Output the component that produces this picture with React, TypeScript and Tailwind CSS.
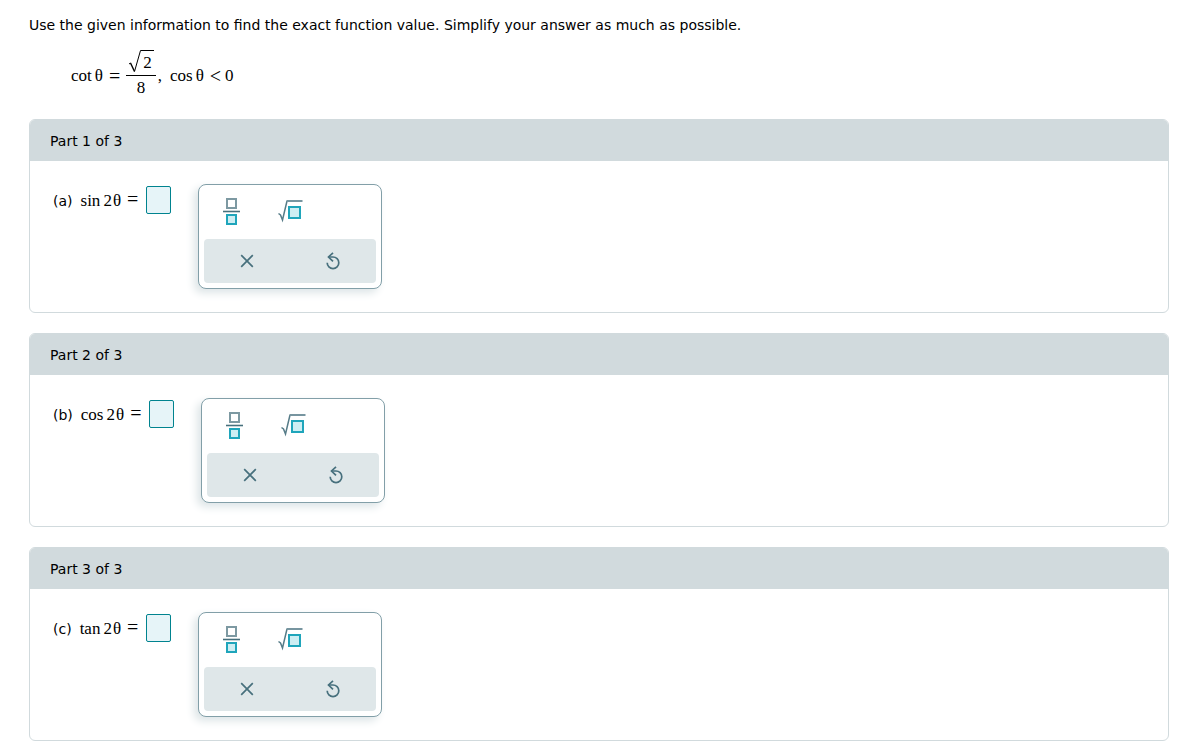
import { useState } from 'react';

interface Part {
  label: string;
  fn: string;
}

const parts: Part[] = [
  { label: 'a', fn: 'sin' },
  { label: 'b', fn: 'cos' },
  { label: 'c', fn: 'tan' },
];

const mathFont = "font-['Liberation_Serif',serif] text-[17px]";
const relationFont = "font-['Liberation_Serif',serif] text-[20px] leading-5";

function FractionIcon() {
  return (
    <svg width="17" height="27" viewBox="0 0 17 27" fill="none" aria-hidden="true">
      <rect x="4" y="1" width="9" height="9" fill="#fff" stroke="#7d99a2" strokeWidth="2" />
      <path d="M0 13.5h17" stroke="#c9d6d9" strokeWidth="3" />
      <path d="M0 13.5h17" stroke="#47707d" />
      <rect x="4" y="17" width="9" height="9" fill="#cdeef3" stroke="#1fa5bb" strokeWidth="2" />
    </svg>
  );
}

function RootIcon() {
  return (
    <svg width="25" height="23" viewBox="0 0 25 23" fill="none" aria-hidden="true">
      <path d="M.5 13.5L2.5 15L4.500 20L9 1" stroke="#567c88" strokeWidth="1.5" />
      <path d="M8.5 1H24.500" stroke="#7795a0" strokeWidth="2" />
      <rect x="11" y="7" width="11" height="11" fill="#cdeef3" stroke="#1fa5bb" strokeWidth="2" />
    </svg>
  );
}

function ClearIcon() {
  return (
    <svg width="14" height="14" viewBox="0 0 14 14" fill="none" aria-hidden="true">
      <path d="M1.200 1.200l11.600 11.600M12.800 1.200l-11.600 11.600" stroke="#47707d" strokeWidth="1.700" />
    </svg>
  );
}

function ResetIcon() {
  return (
    <svg width="14" height="18" viewBox="0 0 14 18" fill="none" aria-hidden="true">
      <path d="M1.200 10.800a5.800 5.800 0 1 0 5.800-5.800H2.500" stroke="#47707d" strokeWidth="1.700" />
      <path d="M7 .8L2.500 5L7 9.300" stroke="#47707d" strokeWidth="1.700" />
    </svg>
  );
}

function Given() {
  return (
    <div className={`flex items-center pl-[42px] ${mathFont} leading-5`}>
      <span className="pt-0.5">cot</span>
      <span className="ml-[3px] pt-0.5">θ</span>
      <span className={`ml-1.5 pt-0.5 ${relationFont}`}>=</span>
      <span className="ml-1.5 flex flex-col items-center">
        <span className="flex border-b border-black pr-0.5 pb-0.5 pl-[3px]">
          <svg width="12" height="22" viewBox="0 0 12 22" fill="none" aria-hidden="true">
            <path d="M0 14L1.500 13" stroke="#000" />
            <path d="M1.500 13L5.500 21.500" stroke="#000" strokeWidth="1.400" />
            <path d="M5.500 21.500L11.500 .5H12" stroke="#000" />
          </svg>
          <span className="border-t border-black pt-0.5 pr-0.5 pl-0.5 leading-5">2</span>
        </span>
        <span className="leading-6">8</span>
      </span>
      <span className="ml-0.5 pt-0.5">,</span>
      <span className="ml-2 pt-0.5">cos</span>
      <span className="ml-[3px] pt-0.5">θ</span>
      <span className={`ml-1.5 pt-0.5 ${relationFont}`}>&lt;</span>
      <span className="ml-1 pt-0.5">0</span>
    </div>
  );
}

interface KeypadProps {
  onInsert: (text: string) => void;
  onClear: () => void;
}

function Keypad({ onInsert, onClear }: KeypadProps) {
  return (
    <div className="w-[184px] rounded-lg border border-[#829fa8] bg-white p-[5px] shadow-[-4px_4px_8px_#dde5e7]">
      <div className="grid h-[49px] grid-cols-[55px_63px] pb-1.5">
        <button type="button" aria-label="Fraction" className="flex items-center justify-center" onClick={() => onInsert('/')}>
          <FractionIcon />
        </button>
        <button type="button" aria-label="Square root" className="flex items-center justify-center" onClick={() => onInsert('√')}>
          <RootIcon />
        </button>
      </div>
      <div className="grid h-11 grid-cols-2 rounded-sm bg-[#dfe7e9]">
        <button type="button" aria-label="Clear" className="flex items-center justify-center" onClick={onClear}>
          <ClearIcon />
        </button>
        <button type="button" aria-label="Reset" className="flex items-center justify-center" onClick={onClear}>
          <ResetIcon />
        </button>
      </div>
    </div>
  );
}

function PartCard({ part, index }: { part: Part; index: number }) {
  const [answer, setAnswer] = useState('');
  const id = `answer-${part.label}`;

  return (
    <section className="overflow-hidden rounded-md border border-[#d1dadd]">
      <h2 className="bg-[#d1dadd] px-5 pt-[11px] pb-2.5 leading-5">
        <span>Part {index + 1} of {parts.length}</span>
      </h2>
      <div className="flex items-start p-[23px]">
        <label htmlFor={id} className="mt-[5px] flex items-baseline leading-5">
          <span>({part.label})</span>
          <span className={`ml-2 ${mathFont}`}>{part.fn}</span>
          <span className={`ml-[3px] ${mathFont}`}>2</span>
          <span className={`ml-px ${mathFont}`}>θ</span>
          <span className={`ml-1.5 ${relationFont}`}>=</span>
        </label>
        <input
          id={id}
          value={answer}
          onChange={(e) => setAnswer(e.target.value)}
          className="mt-0.5 mr-[27px] ml-2 h-7 w-[25px] rounded-xs border border-[#00838f] bg-[#e6f4f8] text-center outline-none"
        />
        <Keypad onInsert={(text) => setAnswer(answer + text)} onClear={() => setAnswer('')} />
      </div>
    </section>
  );
}

export default function App() {
  return (
    <main className="bg-white pt-[15px] pr-[17px] pb-3 pl-[29px] font-['DejaVu_Sans',sans-serif] text-sm text-black">
      <p className="leading-5">
        Use the given information to find the exact function value. Simplify your answer as much as possible.
      </p>
      <div className="mt-[15px] mb-[19px]">
        <Given />
      </div>
      <div className="flex flex-col gap-5">
        {parts.map((part, i) => (
          <PartCard key={part.label} part={part} index={i} />
        ))}
      </div>
    </main>
  );
}
